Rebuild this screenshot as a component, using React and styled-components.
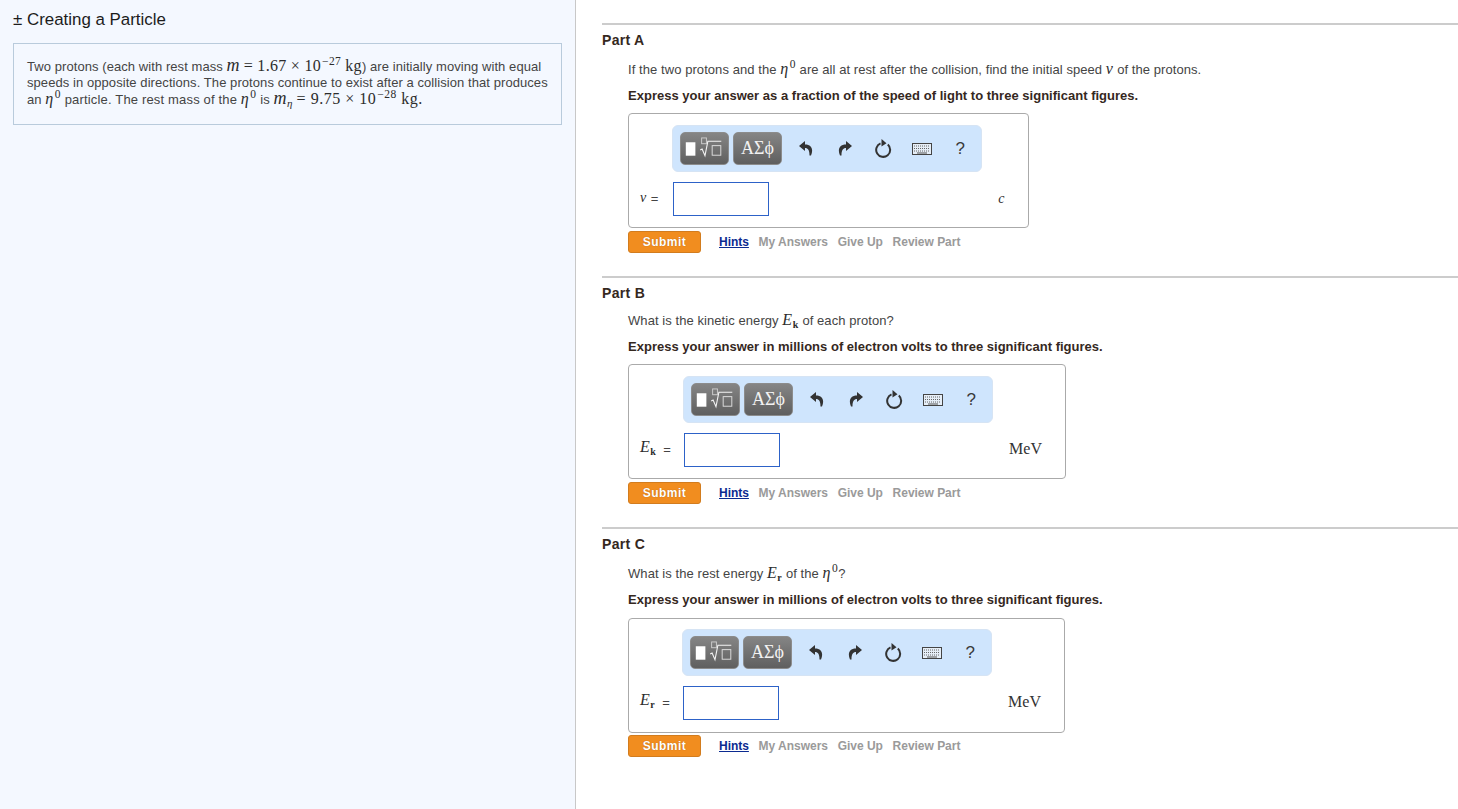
import styled, { createGlobalStyle } from "styled-components";

const GlobalStyle = createGlobalStyle`
  html, body { margin: 0; padding: 0; background: #fff; }
  body { font-family: "Liberation Sans", Arial, sans-serif; }
`;

const Page = styled.div`
  display: grid;
  grid-template-columns: 576px 1fr;
  width: 1458px;
  height: 809px;
  overflow: hidden;
`;

const Sidebar = styled.aside`
  background: #f4f8ff;
  border-right: 1px solid #c8c8c8;
  padding: 10px 13px 0;
  box-sizing: border-box;
`;

const Title = styled.h1`
  margin: 0 0 14px;
  font-size: 16.9px;
  line-height: 19px;
  font-weight: 400;
  color: #1c1c1c;
`;

const Statement = styled.div`
  width: 549px;
  height: 82px;
  box-sizing: border-box;
  border: 1px solid #b9cbdc;
  padding: 14px 13px 0;
  font-size: 13px;
  letter-spacing: 0.07px;
  line-height: 16px;
  color: #444;
  white-space: nowrap;
`;

const LooseText = styled.span`
  letter-spacing: 0.17px;
`;

const Main = styled.main`
  padding: 23px 0 0 26px;
`;

const Part = styled.section`
  border-top: 2px solid #ccc;
  height: ${(p) => p.$height}px;
  box-sizing: border-box;
  padding-top: 7px;
`;

const PartLabel = styled.h2`
  margin: 0;
  font-size: 14px;
  letter-spacing: 0.3px;
  line-height: 16px;
  font-weight: 700;
  color: #35281e;
`;

const Body = styled.div`
  padding-left: 26px;
`;

const Question = styled.p`
  margin: ${(p) => p.$top}px 0 0;
  font-size: 13px;
  letter-spacing: 0.07px;
  line-height: 18px;
  color: #444;
  white-space: nowrap;
`;

const Instruction = styled.p`
  margin: 8px 0 0;
  font-size: 13px;
  letter-spacing: 0.02px;
  line-height: 18px;
  font-weight: 700;
  color: #35281e;
  white-space: nowrap;
`;

const AnswerBox = styled.div`
  display: grid;
  grid-template-columns: ${(p) => p.$labelWidth}px 1fr auto;
  grid-template-rows: 47px 34px;
  row-gap: 10px;
  width: ${(p) => p.$width}px;
  height: 115px;
  box-sizing: border-box;
  margin-top: ${(p) => p.$top}px;
  padding: ${(p) => p.$padTop}px 0 0 11px;
  border: 1px solid #aaa;
  border-radius: 4px;
  background: #fff;
`;

const Toolbar = styled.div`
  grid-column: 2 / 4;
  display: flex;
  align-items: center;
  width: 310px;
  height: 47px;
  margin-left: -1px;
  padding-left: 7px;
  box-sizing: border-box;
  background: #cfe5fd;
  border: 1px solid #d6e4f4;
  border-radius: 6px;
`;

const PaletteButton = styled.div`
  display: flex;
  align-items: center;
  justify-content: center;
  width: 49px;
  height: 33px;
  box-sizing: border-box;
  margin-right: 4px;
  border: 1px solid #8c8c8c;
  border-radius: 5px;
  background: linear-gradient(#858585, #5f5f5f);
  color: #f2f2f2;
  font-family: "Liberation Serif", serif;
  font-size: 18px;
`;

const Tools = styled.div`
  display: flex;
  margin-left: 1px;
`;

const ToolIcon = styled.div`
  display: flex;
  align-items: center;
  justify-content: center;
  width: 38.5px;
  height: 33px;
  color: #3a3a3a;
  font-size: 17px;
`;

const Label = styled.div`
  display: flex;
  align-items: center;
  padding-bottom: 2px;
  font-size: 13px;
  color: #444;
  gap: ${(p) => p.$gap}px;
`;

const Field = styled.div`
  width: 96px;
  height: 34px;
  box-sizing: border-box;
  border: 1px solid #2d62c8;
  background: #fff;
`;

const Unit = styled.div`
  grid-column: 3;
  display: flex;
  align-items: center;
  padding: 0 ${(p) => p.$right}px ${(p) => p.$bottom}px 0;
  font-family: "Liberation Serif", serif;
  font-size: ${(p) => p.$size}px;
  color: #333;
`;

const Actions = styled.div`
  display: flex;
  align-items: center;
  margin-top: ${(p) => p.$top}px;
  height: 22px;
  font-size: 12px;
  font-weight: 700;
`;

const Submit = styled.button`
  width: 73px;
  height: 22px;
  margin-right: 18px;
  padding: 0;
  border: 1px solid #d27c1e;
  border-radius: 3px;
  background: #f18d1f;
  color: #fff;
  font: 700 12px "Liberation Sans", sans-serif;
  letter-spacing: 0.5px;
  text-shadow: 0 0 1px #a8590c;
`;

const ActionLink = styled.a`
  margin-right: 9.7px;
  letter-spacing: -0.02px;
  color: ${(p) => (p.$active ? "#0b2a90" : "#9a9a9a")};
  text-decoration: ${(p) => (p.$active ? "underline" : "none")};
`;

const MathText = styled.span`
  font-family: "Liberation Serif", serif;
  font-size: 16px;
  letter-spacing: ${(p) => p.$spacing}px;
  color: #2c2c2c;
`;

const Var = styled.i`
  font-family: "Liberation Serif", serif;
  font-size: ${(p) => p.$size || 16}px;
  letter-spacing: 0.5px;
  line-height: 0;
  color: #2c2c2c;
`;

const Sup = styled.sup`
  margin-left: 1px;
  font-size: 11.5px;
  font-style: normal;
  line-height: 0;
  vertical-align: 6px;
`;

const Sub = styled.sub`
  font-size: ${(p) => p.$size || 10}px;
  line-height: 0;
  vertical-align: -3px;
  font-style: ${(p) => (p.$bold ? "normal" : "italic")};
  font-weight: ${(p) => (p.$bold ? 700 : 400)};
`;

const Eta0 = () => (
  <Var>
    η<Sup>0</Sup>
  </Var>
);

const RootIcon = () => (
  <svg width="49" height="33" viewBox="0 0 49 33">
    <rect x="5" y="10" width="10" height="14" fill="#fff" />
    <rect x="21.5" y="5.5" width="5" height="6" fill="none" stroke="#ccc" />
    <path d="M20 18 l2 -1 l3 7 l3 -15 h14" fill="none" stroke="#f4f4f4" strokeWidth="1.1" />
    <rect x="32.5" y="13.5" width="9" height="10" fill="none" stroke="#ddd" />
  </svg>
);

const Undo = ({ flip }) => (
  <svg width="14" height="15" viewBox="0 0 14 15" style={flip ? { transform: "scaleX(-1)" } : undefined}>
    <path d="M6 0 L0 5 L6 10 V7 C9 7 10.5 9 10.5 14.5 L12 14.5 C14.5 9 13 3.5 6 3.5 Z" fill="#333" />
  </svg>
);

const Reset = () => (
  <svg width="18" height="19" viewBox="0 0 18 19">
    <path d="M13.8 5.6 A7 7 0 1 1 6.5 4.4" fill="none" stroke="#333" strokeWidth="2" />
    <path d="M7.5 0 L12.5 4.2 L7.5 7.5 Z" fill="#333" />
  </svg>
);

const Keyboard = () => (
  <svg width="20" height="12" viewBox="0 0 20 12">
    <rect x="0.5" y="0.5" width="19" height="11" fill="#e6eef7" stroke="#444" />
    <path d="M2 3 H18 M2 5.5 H18 M2 8 H18" stroke="#666" strokeDasharray="1 1" />
    <path d="M5 10 H15" stroke="#555" />
  </svg>
);

const AnswerToolbar = () => (
  <Toolbar>
    <PaletteButton><RootIcon /></PaletteButton>
    <PaletteButton>ΑΣϕ</PaletteButton>
    <Tools>
      <ToolIcon><Undo /></ToolIcon>
      <ToolIcon><Undo flip /></ToolIcon>
      <ToolIcon><Reset /></ToolIcon>
      <ToolIcon><Keyboard /></ToolIcon>
      <ToolIcon>?</ToolIcon>
    </Tools>
  </Toolbar>
);

const ActionRow = ({ top }) => (
  <Actions $top={top}>
    <Submit>Submit</Submit>
    <ActionLink $active>Hints</ActionLink>
    <ActionLink>My Answers</ActionLink>
    <ActionLink>Give Up</ActionLink>
    <ActionLink>Review Part</ActionLink>
  </Actions>
);

const parts = [
  {
    id: "A",
    height: 253,
    questionTop: 13,
    boxTop: 8,
    padTop: 11,
    actionsTop: 3,
    width: 401,
    labelWidth: 33,
    labelGap: 4,
    unit: <Var $size={14}>c</Var>,
    unitRight: 23,
    unitBottom: 0,
    unitSize: 14,
    symbol: <Var $size={14}>v</Var>,
    question: (
      <>If the two protons and the <Eta0 /> are all at rest after the collision, find the initial speed <Var>v</Var> of the protons.</>
    ),
    instruction: "Express your answer as a fraction of the speed of light to three significant figures.",
  },
  {
    id: "B",
    height: 251,
    questionTop: 11,
    boxTop: 8,
    padTop: 11,
    actionsTop: 3,
    width: 438,
    labelWidth: 44,
    labelGap: 7,
    unit: "MeV",
    unitRight: 23,
    unitBottom: 2,
    unitSize: 16,
    symbol: <Var>E<Sub $bold>k</Sub></Var>,
    question: (
      <>What is the kinetic energy <Var>E<Sub $bold>k</Sub></Var> of each proton?</>
    ),
    instruction: "Express your answer in millions of electron volts to three significant figures.",
  },
  {
    id: "C",
    height: 260,
    questionTop: 13,
    boxTop: 9,
    padTop: 10,
    actionsTop: 2,
    width: 437,
    labelWidth: 43,
    labelGap: 7,
    unit: "MeV",
    unitRight: 23,
    unitBottom: 2,
    unitSize: 16,
    symbol: <Var>E<Sub $bold>r</Sub></Var>,
    question: (
      <>What is the rest energy <Var>E<Sub $bold>r</Sub></Var> of the <Eta0 />?</>
    ),
    instruction: "Express your answer in millions of electron volts to three significant figures.",
  },
];

const App = () => (
  <>
    <GlobalStyle />
    <Page>
      <Sidebar>
        <Title>± Creating a Particle</Title>
        <Statement>
          Two protons (each with rest mass <Var $size={18}>m</Var> <MathText $spacing={0.3}>= 1.67 × 10<Sup>−27</Sup> kg</MathText>) are initially moving with equal<br />
          speeds in opposite directions. The protons continue to exist after a collision that produces<br />
          an <Eta0 /> <LooseText>particle. The rest mass of the</LooseText> <Eta0 /> is <Var $size={18}>m<Sub $size={11}>η</Sub></Var> <MathText $spacing={0.5}>= 9.75 × 10<Sup>−28</Sup> kg.</MathText>
        </Statement>
      </Sidebar>
      <Main>
        {parts.map((part) => (
          <Part key={part.id} $height={part.height}>
            <PartLabel>Part {part.id}</PartLabel>
            <Body>
              <Question $top={part.questionTop}>{part.question}</Question>
              <Instruction>{part.instruction}</Instruction>
              <AnswerBox $width={part.width} $labelWidth={part.labelWidth} $top={part.boxTop} $padTop={part.padTop}>
                <AnswerToolbar />
                <Label $gap={part.labelGap}>{part.symbol} =</Label>
                <Field />
                <Unit $right={part.unitRight} $bottom={part.unitBottom} $size={part.unitSize}>{part.unit}</Unit>
              </AnswerBox>
              <ActionRow top={part.actionsTop} />
            </Body>
          </Part>
        ))}
      </Main>
    </Page>
  </>
);

export default App;
